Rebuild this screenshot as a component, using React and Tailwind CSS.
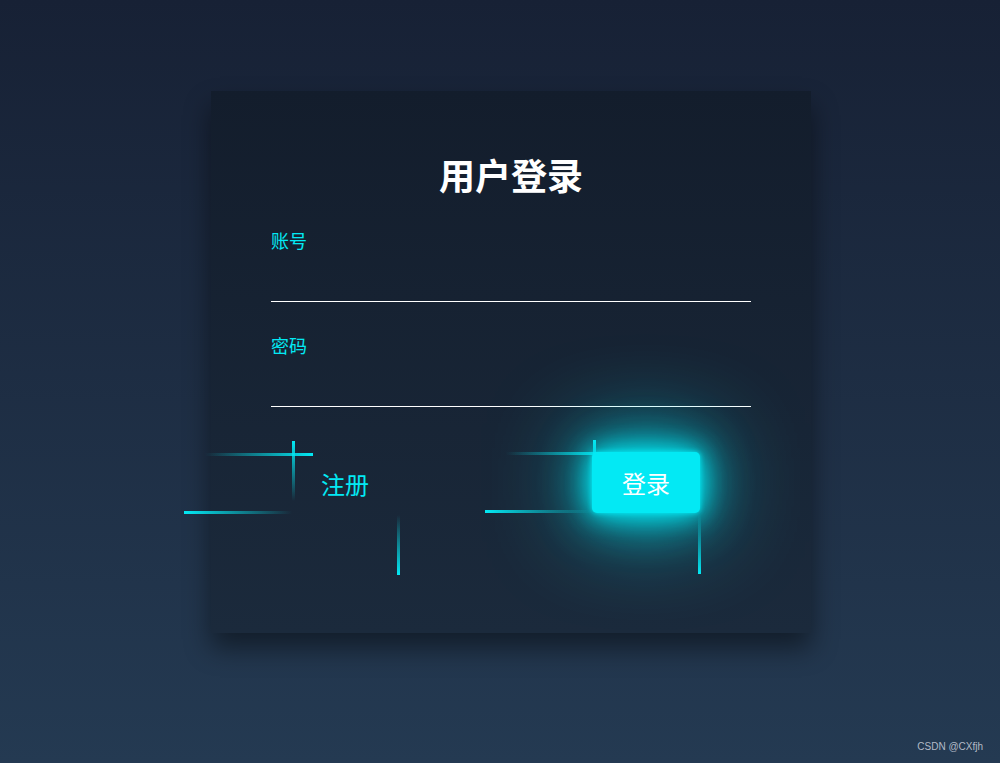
import React from 'react';

const cjk = { fontFamily: '"Noto Sans CJK SC", "Noto Sans", sans-serif' };

// running neon lines around a button (frozen mid-animation)
function NeonLines() {
  return (
    <>
      <span className="pointer-events-none absolute left-[-86px] top-0 h-[3px] w-[108px] bg-gradient-to-r from-transparent to-[#03e9f4]" />
      <span className="pointer-events-none absolute left-px top-[-12px] h-[60px] w-[3px] bg-gradient-to-b from-[#03e9f4] to-transparent" />
      <span className="pointer-events-none absolute left-[-107px] top-[58px] h-[3px] w-[108px] bg-gradient-to-r from-[#03e9f4] to-transparent" />
      <span className="pointer-events-none absolute left-[106px] top-[62px] h-[60px] w-[3px] bg-gradient-to-b from-transparent to-[#03e9f4]" />
    </>
  );
}

function Field({ label, type, className }) {
  return (
    <div className={className}>
      <label className="block text-[18px] leading-[27px] text-[#03e9f4]">{label}</label>
      <input
        type={type}
        className="block h-[48px] w-full border-b border-white bg-transparent text-[16px] text-white outline-none"
      />
    </div>
  );
}

export default function App() {
  return (
    <div
      className="relative flex min-h-[763px] w-full flex-col bg-gradient-to-b from-[#172135] to-[#243a52] pl-[211px] pt-[91px]"
      style={cjk}
    >
      <div className="flex h-[542px] w-[600px] flex-col bg-gradient-to-b from-[#131d2c] to-[#1b2a3c] px-[60px] pt-[56px] shadow-[0_15px_25px_rgba(0,0,0,0.45)]">
        <h2 className="text-center text-[36px] font-bold leading-[54px] text-white">用户登录</h2>

        <Field label="账号" type="text" className="mt-[26px]" />
        <Field label="密码" type="password" className="mt-[30px]" />

        <div className="mt-[45px] flex items-start justify-between pl-[20px] pr-[51px]">
          <button className="relative mt-px h-[61px] w-[108px] text-[24px] text-[#03e9f4]">
            <NeonLines />
            <span className="relative">注册</span>
          </button>
          <button className="relative h-[61px] w-[108px] rounded-[5px] bg-[#03e9f4] text-[24px] text-white shadow-[0_0_5px_#03e9f4,0_0_25px_#03e9f4,0_0_50px_#03e9f4,0_0_100px_#03e9f4]">
            <NeonLines />
            <span className="relative">登录</span>
          </button>
        </div>
      </div>

      <div
        className="absolute bottom-[9px] right-[17px] text-[10px] text-[#b3bac6]"
        style={{ fontFamily: '"Liberation Sans", Arial, sans-serif' }}
      >
        CSDN @CXfjh
      </div>
    </div>
  );
}
